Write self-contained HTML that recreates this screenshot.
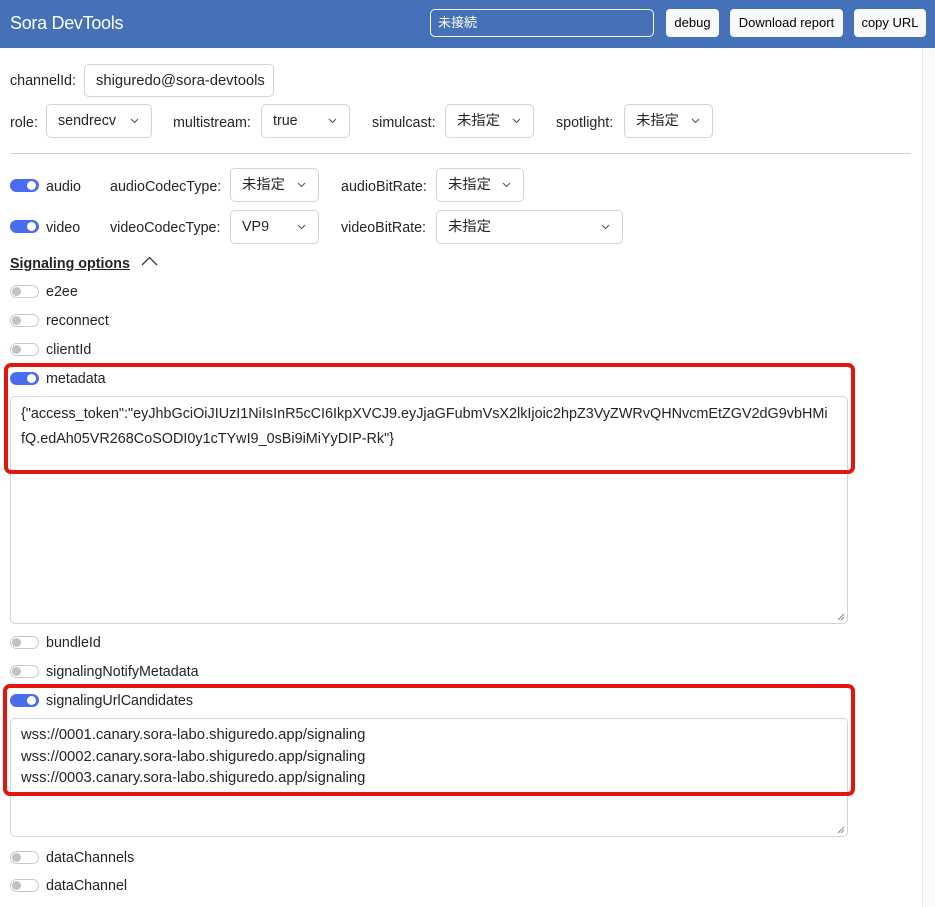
<!DOCTYPE html>
<html><head><meta charset="utf-8"><style>
*{box-sizing:border-box;margin:0;padding:0}
body{width:935px;height:907px;overflow:hidden;background:#fff;font-family:"Liberation Sans","Noto Sans CJK JP",sans-serif;font-size:14.3px;color:#212529;position:relative}
.a{position:absolute;white-space:nowrap}
.hdr{left:0;top:0;width:935px;height:48px;background:#4471b8}
.btn{top:9px;height:28px;background:#f8f9fa;border-radius:4px;font-size:13px;color:#000;text-align:center;line-height:28px}
.sel{height:34px;border:1px solid #ced4da;border-radius:5px;background:#fff;line-height:32px;padding-left:11px}
.sel svg{position:absolute;right:12px;top:13px}
.lbl{line-height:18px;margin-top:1px}
.tg{width:29px;height:13px;border-radius:7px;border:1px solid #c8c8c8;background:#fff}
.tg::after{content:"";position:absolute;left:1px;top:1px;width:9px;height:9px;border-radius:50%;background:#c2c2c2}
.on{background:#4a6cf0;border-color:#4a6cf0}
.on::after{left:auto;right:2px;width:9px;height:9px;top:1px;background:#fff}
.ta{border:1px solid #ced4da;border-radius:5px;background:#fff}
.red{border:4px solid #e3150f;border-radius:7px}
.rs{position:absolute;right:2px;bottom:2px}
</style></head><body>
<div class="a hdr"></div>
<div class="a" style="left:10px;top:13px;font-size:18px;color:#fff;letter-spacing:-0.3px">Sora DevTools</div>
<div class="a" style="left:430px;top:9px;width:224px;height:28px;border:1px solid #fff;border-radius:5px;color:#fff;font-size:13px;line-height:26px;padding-left:7px">未接続</div>
<div class="a btn" style="left:666px;width:53px">debug</div>
<div class="a btn" style="left:730px;width:113px">Download report</div>
<div class="a btn" style="left:854px;width:72px">copy URL</div>
<div class="a" style="left:922px;top:48px;width:13px;height:859px;background:#fafafa;border-left:1px solid #e8e8e8"></div>

<div class="a lbl" style="left:10px;top:71px">channelId:</div>
<div class="a sel" style="left:84px;top:64px;width:190px;height:33px;overflow:hidden;font-size:14.8px">shiguredo@sora-devtools</div>

<div class="a lbl" style="left:10px;top:113px">role:</div>
<div class="a sel" style="left:46px;top:104px;width:106px">sendrecv<svg width="9" height="6"><path d="M1 1l3.5 3.5L8 1" fill="none" stroke="#555" stroke-width="1.1"/></svg></div>
<div class="a lbl" style="left:173px;top:113px">multistream:</div>
<div class="a sel" style="left:261px;top:104px;width:89px">true<svg width="9" height="6"><path d="M1 1l3.5 3.5L8 1" fill="none" stroke="#555" stroke-width="1.1"/></svg></div>
<div class="a lbl" style="left:372px;top:113px">simulcast:</div>
<div class="a sel" style="left:445px;top:104px;width:89px">未指定<svg width="9" height="6"><path d="M1 1l3.5 3.5L8 1" fill="none" stroke="#555" stroke-width="1.1"/></svg></div>
<div class="a lbl" style="left:556px;top:113px">spotlight:</div>
<div class="a sel" style="left:624px;top:104px;width:89px">未指定<svg width="9" height="6"><path d="M1 1l3.5 3.5L8 1" fill="none" stroke="#555" stroke-width="1.1"/></svg></div>

<div class="a" style="left:10px;top:153px;width:901px;height:1px;background:#d0d0d0"></div>

<div class="a tg on" style="left:10px;top:179px"></div>
<div class="a lbl" style="left:46px;top:177px">audio</div>
<div class="a lbl" style="left:110px;top:177px">audioCodecType:</div>
<div class="a sel" style="left:230px;top:168px;width:89px">未指定<svg width="9" height="6"><path d="M1 1l3.5 3.5L8 1" fill="none" stroke="#555" stroke-width="1.1"/></svg></div>
<div class="a lbl" style="left:341px;top:177px">audioBitRate:</div>
<div class="a sel" style="left:436px;top:168px;width:88px">未指定<svg width="9" height="6"><path d="M1 1l3.5 3.5L8 1" fill="none" stroke="#555" stroke-width="1.1"/></svg></div>

<div class="a tg on" style="left:10px;top:220px"></div>
<div class="a lbl" style="left:46px;top:218px">video</div>
<div class="a lbl" style="left:110px;top:218px">videoCodecType:</div>
<div class="a sel" style="left:230px;top:210px;width:89px">VP9<svg width="9" height="6"><path d="M1 1l3.5 3.5L8 1" fill="none" stroke="#555" stroke-width="1.1"/></svg></div>
<div class="a lbl" style="left:341px;top:218px">videoBitRate:</div>
<div class="a sel" style="left:436px;top:210px;width:187px">未指定<svg width="9" height="6"><path d="M1 1l3.5 3.5L8 1" fill="none" stroke="#555" stroke-width="1.1"/></svg></div>

<div class="a lbl" style="left:10px;top:254px;font-weight:bold;text-decoration:underline">Signaling options</div>
<svg class="a" style="left:141px;top:256px" width="17" height="10"><path d="M1 9l7.5-7.5L16 9" fill="none" stroke="#333" stroke-width="1.3"/></svg>

<div class="a tg" style="left:10px;top:285px"></div><div class="a lbl" style="left:46px;top:282px">e2ee</div>
<div class="a tg" style="left:10px;top:314px"></div><div class="a lbl" style="left:46px;top:311px">reconnect</div>
<div class="a tg" style="left:10px;top:343px"></div><div class="a lbl" style="left:46px;top:340px">clientId</div>
<div class="a tg on" style="left:10px;top:372px"></div><div class="a lbl" style="left:46px;top:369px">metadata</div>

<div class="a ta" style="left:10px;top:396px;width:838px;height:228px"><svg class="rs" width="8" height="8"><path d="M1 7L7 1M4 7L7 4" stroke="#888" stroke-width="1"/></svg></div>
<div class="a" style="left:21px;top:402px;line-height:25px;font-size:14.4px">{"access_token":"eyJhbGciOiJIUzI1NiIsInR5cCI6IkpXVCJ9.eyJjaGFubmVsX2lkIjoic2hpZ3VyZWRvQHNvcmEtZGV2dG9vbHMi<br>fQ.edAh05VR268CoSODI0y1cTYwI9_0sBi9iMiYyDIP-Rk"}</div>
<div class="a red" style="left:4px;top:363px;width:851px;height:111px"></div>

<div class="a tg" style="left:10px;top:636px"></div><div class="a lbl" style="left:46px;top:633px">bundleId</div>
<div class="a tg" style="left:10px;top:665px"></div><div class="a lbl" style="left:46px;top:662px">signalingNotifyMetadata</div>
<div class="a tg on" style="left:10px;top:694px"></div><div class="a lbl" style="left:46px;top:691px">signalingUrlCandidates</div>

<div class="a ta" style="left:10px;top:718px;width:838px;height:119px"><svg class="rs" width="8" height="8"><path d="M1 7L7 1M4 7L7 4" stroke="#888" stroke-width="1"/></svg></div>
<div class="a" style="left:21px;top:725px;line-height:21.5px;font-size:14.8px">wss://0001.canary.sora-labo.shiguredo.app/signaling<br>wss://0002.canary.sora-labo.shiguredo.app/signaling<br>wss://0003.canary.sora-labo.shiguredo.app/signaling</div>
<div class="a red" style="left:3px;top:684px;width:852px;height:112px"></div>

<div class="a tg" style="left:10px;top:851px"></div><div class="a lbl" style="left:46px;top:848px">dataChannels</div>
<div class="a tg" style="left:10px;top:879px"></div><div class="a lbl" style="left:46px;top:876px">dataChannel</div>
</body></html>
